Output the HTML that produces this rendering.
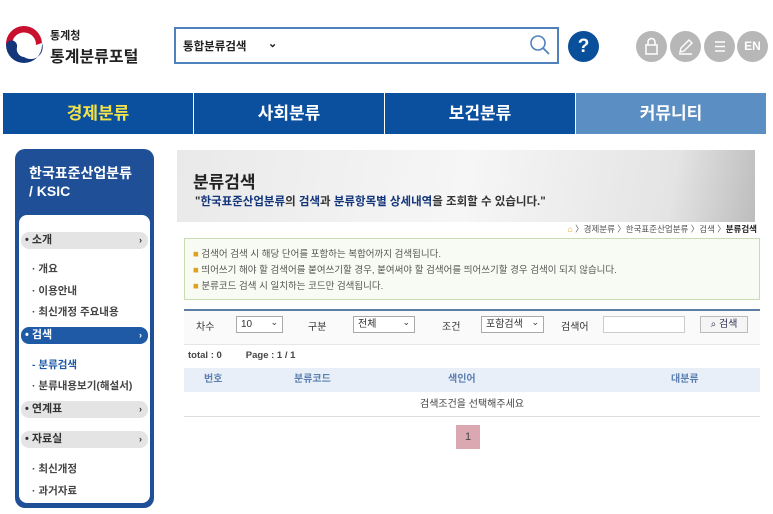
<!DOCTYPE html>
<html><head><meta charset="utf-8"><style>
*{margin:0;padding:0;box-sizing:border-box}
body{width:773px;height:514px;background:#fff;font-family:"Liberation Sans","Noto Sans CJK KR",sans-serif;position:relative;overflow:hidden;color:#333}
.a{position:absolute}
.nav div{position:absolute;top:0;height:41px;line-height:41px;text-align:center;color:#fff;font-size:17px;font-weight:bold;background:#0b4f9f}
.bar{position:absolute;left:21px;width:127px;height:17px;border-radius:8px;background:#e4e4e4;font-size:11px;font-weight:bold;line-height:17px;padding-left:4px;color:#333}
.bar span{position:absolute;right:6px;font-size:9px}
.sub{position:absolute;left:32px;font-size:10.5px;font-weight:bold;color:#444}
.gc{position:absolute;top:31px;width:31px;height:31px;border-radius:50%;background:#b7b7b7;color:#fff;text-align:center;line-height:31px;font-size:12px;font-weight:bold}
.sel{position:absolute;top:316px;height:17px;border:1px solid #aaa;background:#fff;font-size:10px;line-height:15px;padding-left:4px}
.sel i{position:absolute;right:4px;top:-2px;font-style:normal;font-size:9px}
.lb{position:absolute;top:318px;font-size:10px;color:#333}
</style></head><body>
<svg class="a" style="left:3px;top:25px" width="42" height="40" viewBox="0 0 42 40">
<path d="M3 20 A18 18 0 0 1 39 18 L33 20 A12 12 0 0 0 9 19 Z" fill="#c8102e"/>
<path d="M3 20 A18 18 0 0 0 39 20 L39 18 A12 12 0 0 1 21 32 A8 8 0 0 1 14 22 A5.5 5.5 0 0 0 3 20 Z" fill="#13357a"/>
</svg>
<div class="a" style="left:50px;top:27px;font-size:11px;font-weight:bold;color:#222">통계청</div>
<div class="a" style="left:50px;top:43px;font-size:16px;font-weight:bold;color:#222">통계분류포털</div>
<div class="a" style="left:174px;top:27px;width:385px;height:37px;border:2px solid #4f82bd"></div>
<div class="a" style="left:183px;top:38px;font-size:11.5px;font-weight:bold;color:#222">통합분류검색</div>
<div class="a" style="left:268px;top:37px;font-size:11px;font-weight:bold;color:#222">⌄</div>
<svg class="a" style="left:529px;top:34px" width="22" height="22"><circle cx="9" cy="9" r="7" fill="none" stroke="#4f82bd" stroke-width="1.6"/><path d="M14 14 L20 20" stroke="#4f82bd" stroke-width="1.8"/></svg>
<div class="a" style="left:568px;top:31px;width:31px;height:31px;border-radius:50%;background:#0a4f9a;color:#fff;text-align:center;line-height:31px;font-size:19px;font-weight:bold">?</div>
<div class="gc" style="left:636px"><svg width="31" height="31"><rect x="10" y="14" width="11" height="9" fill="none" stroke="#fff" stroke-width="1.5"/><path d="M12 14 V11 a3.5 3.5 0 0 1 7 0 V14" fill="none" stroke="#fff" stroke-width="1.5"/></svg></div>
<div class="gc" style="left:670px"><svg width="31" height="31"><path d="M10 21 L11 17 L19 9 L22 12 L14 20 Z M9 23 H22" fill="none" stroke="#fff" stroke-width="1.4"/></svg></div>
<div class="gc" style="left:704px"><svg width="31" height="31"><path d="M11 11H21M11 15.5H21M11 20H21" stroke="#fff" stroke-width="1.6"/></svg></div>
<div class="gc" style="left:737px">EN</div>
<div class="a nav" style="left:0;top:93px;width:773px;height:41px">
<div style="left:3px;width:190px;color:#f2e24a">경제분류</div>
<div style="left:194px;width:190px">사회분류</div>
<div style="left:385px;width:190px">보건분류</div>
<div style="left:576px;width:190px;background:#5b8fc3">커뮤니티</div>
</div>
<div class="a" style="left:15px;top:149px;width:139px;height:359px;background:#1f4f96;border-radius:10px"></div>
<div class="a" style="left:29px;top:164px;font-size:14px;font-weight:bold;color:#fff;line-height:18px">한국표준산업분류<br>/ KSIC</div>
<div class="a" style="left:19px;top:215px;width:131px;height:288px;background:#fff;border-radius:8px"></div>
<div class="bar" style="top:232px">• 소개<span>›</span></div>
<div class="sub" style="top:261px">· 개요</div>
<div class="sub" style="top:283px">· 이용안내</div>
<div class="sub" style="top:304px">· 최신개정 주요내용</div>
<div class="bar" style="top:327px;background:#1f5aa6;color:#fff">• 검색<span>›</span></div>
<div class="sub" style="top:357px;color:#1f5aa6">- 분류검색</div>
<div class="sub" style="top:378px">· 분류내용보기(해설서)</div>
<div class="bar" style="top:401px">• 연계표<span>›</span></div>
<div class="bar" style="top:431px">• 자료실<span>›</span></div>
<div class="sub" style="top:461px">· 최신개정</div>
<div class="sub" style="top:483px">· 과거자료</div>
<div class="a" style="left:177px;top:150px;width:578px;height:72px;background:linear-gradient(100deg,#e9e9e9,#f6f6f6 50%,#e4e4e4 85%,#bdbdbd)"></div>
<div class="a" style="left:193px;top:168px;font-size:17px;font-weight:bold;color:#222">분류검색</div>
<div class="a" style="left:195px;top:193px;font-size:11.5px;font-weight:bold;color:#333">"<span style="color:#13357a">한국표준산업분류</span>의 <span style="color:#13357a">검색</span>과 <span style="color:#13357a">분류항목별 상세내역</span>을 조회할 수 있습니다."</div>
<div class="a" style="right:16px;top:223px;font-size:8.5px;color:#555"><span style="color:#e8a317">⌂</span> 〉경제분류 〉한국표준산업분류 〉검색 〉<b style="color:#222">분류검색</b></div>
<div class="a" style="left:184px;top:238px;width:576px;height:62px;border:1px solid #c9dcb4;background:#f8fbf3;font-size:9.5px;color:#555;line-height:16px;padding:8px 0 0 8px">
<div><span style="color:#e0a020">■</span> 검색어 검색 시 해당 단어를 포함하는 복합어까지 검색됩니다.</div>
<div><span style="color:#e0a020">■</span> 띄어쓰기 해야 할 검색어를 붙여쓰기할 경우, 붙여써야 할 검색어를 띄어쓰기할 경우 검색이 되지 않습니다.</div>
<div><span style="color:#e0a020">■</span> 분류코드 검색 시 일치하는 코드만 검색됩니다.</div></div>
<div class="a" style="left:184px;top:309px;width:576px;height:36px;border-top:2px solid #5d7fa3;border-bottom:1px solid #e6e6e6;background:#fafafa"></div>
<div class="lb" style="left:196px">차수</div>
<div class="sel" style="left:236px;width:47px">10<i>⌄</i></div>
<div class="lb" style="left:308px">구분</div>
<div class="sel" style="left:353px;width:62px">전체<i>⌄</i></div>
<div class="lb" style="left:442px">조건</div>
<div class="sel" style="left:481px;width:63px">포함검색<i>⌄</i></div>
<div class="lb" style="left:561px">검색어</div>
<div class="sel" style="left:603px;width:82px;border-color:#ccc"></div>
<div class="sel" style="left:700px;width:48px;border-color:#bbb;background:#f5f5f5;text-align:center;padding:0;color:#335">⌕ 검색</div>
<div class="a" style="left:188px;top:350px;font-size:9.5px;font-weight:bold;color:#444">total : 0<span style="margin-left:24px">Page : 1 / 1</span></div>
<div class="a" style="left:184px;top:368px;width:576px;height:24px;background:#e8eff8;font-size:10px;color:#5a7fb0;font-weight:bold;line-height:24px">
<span class="a" style="left:20px">번호</span><span class="a" style="left:110px">분류코드</span><span class="a" style="left:264px">색인어</span><span class="a" style="left:487px">대분류</span></div>
<div class="a" style="left:184px;top:392px;width:576px;height:25px;border-bottom:1px solid #ddd;text-align:center;line-height:25px;font-size:10px;color:#444">검색조건을 선택해주세요</div>
<div class="a" style="left:456px;top:425px;width:24px;height:24px;background:#dba8b2;text-align:center;line-height:24px;font-size:11px;color:#444">1</div>
</body></html>
